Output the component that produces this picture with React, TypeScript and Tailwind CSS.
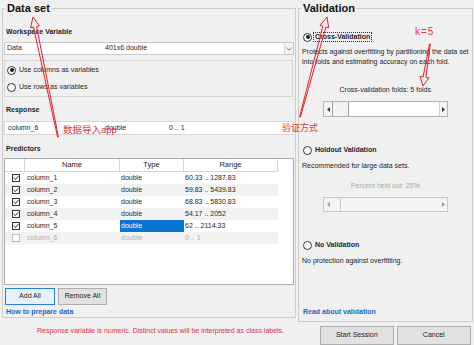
import React from "react";

type Row = { name: string; type: string; range: string; checked: boolean; selected?: boolean; disabled?: boolean };

const rows: Row[] = [
  { name: "column_1", type: "double", range: "60.33 .. 1287.83", checked: true },
  { name: "column_2", type: "double", range: "59.83 .. 5439.83", checked: true },
  { name: "column_3", type: "double", range: "68.83 .. 5830.83", checked: true },
  { name: "column_4", type: "double", range: "54.17 .. 2052", checked: true },
  { name: "column_5", type: "double", range: "62 .. 2114.33", checked: true, selected: true },
  { name: "column_6", type: "double", range: "0 .. 1", checked: false, disabled: true },
];

function Radio({ checked }: { checked?: boolean }) {
  return (
    <span className="w-[9px] h-[9px] rounded-full border border-[#333] bg-white flex items-center justify-center shrink-0">
      {checked && <span className="w-[4px] h-[4px] rounded-full bg-[#1a1a1a]" />}
    </span>
  );
}

function Check({ checked, disabled }: { checked: boolean; disabled?: boolean }) {
  return (
    <span
      className={
        disabled
          ? "w-[8px] h-[8px] border border-[#bdbdbd] bg-white flex items-center justify-center"
          : "w-[8px] h-[8px] border border-[#333] bg-white flex items-center justify-center"
      }
    >
      {checked && (
        <svg width="6" height="6" viewBox="0 0 6 6">
          <path d="M0.6 3 L2.3 4.7 L5.4 1.1" stroke="#222" strokeWidth="0.9" fill="none" />
        </svg>
      )}
    </span>
  );
}

function Slider({ disabled }: { disabled?: boolean }) {
  if (disabled) {
    return (
      <div className="ml-[21px] w-[125px] h-[15px] border border-[#c8c8c8] bg-[#f4f4f4] flex">
        <div className="w-[8px] flex items-center justify-center">
          <svg width="3" height="5" viewBox="0 0 3 5"><path d="M3 0 L0 2.5 L3 5 Z" fill="#9a9a9a" /></svg>
        </div>
        <div className="w-[9px] border-r border-[#c8c8c8]" />
        <div className="flex-1" />
        <div className="w-[8px] flex items-center justify-center">
          <svg width="3" height="5" viewBox="0 0 3 5"><path d="M0 0 L3 2.5 L0 5 Z" fill="#9a9a9a" /></svg>
        </div>
      </div>
    );
  }
  return (
    <div className="ml-[21px] w-[125px] h-[16px] border border-[#b5b5b5] bg-white flex">
      <div className="w-[8px] bg-[#f4f4f4] flex items-center justify-center">
        <svg width="3" height="5" viewBox="0 0 3 5"><path d="M3 0 L0 2.5 L3 5 Z" fill="#333" /></svg>
      </div>
      <div className="w-[17px] bg-[#f2f2f2] border-x border-[#9d9d9d]" />
      <div className="flex-1 bg-white" />
      <div className="w-[8px] bg-[#f4f4f4] border-l border-[#d0d0d0] flex items-center justify-center">
        <svg width="3" height="5" viewBox="0 0 3 5"><path d="M0 0 L3 2.5 L0 5 Z" fill="#333" /></svg>
      </div>
    </div>
  );
}

function arrowPoints(tx: number, ty: number, px: number, py: number, L = 10, W = 4.5, w = 1.6, t = 0.4) {
  const dx = px - tx;
  const dy = py - ty;
  const len = Math.sqrt(dx * dx + dy * dy);
  const ux = dx / len;
  const uy = dy / len;
  const nx = -uy;
  const ny = ux;
  const bx = px - ux * L;
  const by = py - uy * L;
  const pts = [
    [tx + nx * t, ty + ny * t],
    [bx + nx * w, by + ny * w],
    [bx + nx * W, by + ny * W],
    [px, py],
    [bx - nx * W, by - ny * W],
    [bx - nx * w, by - ny * w],
    [tx - nx * t, ty - ny * t],
  ];
  return pts.map((p) => `${p[0].toFixed(1)},${p[1].toFixed(1)}`).join(" ");
}

export default function App() {
  return (
    <div className="w-[474px] h-[345px] bg-[#f0f0f0] relative overflow-hidden text-[7px] text-[#1e1e1e] font-['Liberation_Sans','Noto_Sans_CJK_SC',sans-serif]">
      <div className="flex pl-[2px] pt-[1px] gap-[2px] items-start">
        {/* Left column */}
        <div className="flex flex-col w-[294px]">
          <fieldset className="border border-[#cdcdcd] px-[1px] flex flex-col">
            <legend className="ml-[1px] px-[2px] text-[11px] font-bold leading-[14px] text-[#111]">Data set</legend>
            <div className="mt-[12px] h-[10px] leading-[10px] font-bold pl-[2px]">Workspace Variable</div>
            <div className="mt-[5px] h-[13px] border border-[#c9c9c9] bg-white flex items-center">
              <span className="pl-[2px] w-[100px]">Data</span>
              <span>401x6 double</span>
              <span className="ml-auto w-[9px] h-full bg-[#f2f2f2] border-l border-[#d4d4d4] flex items-center justify-center">
                <svg width="6" height="4" viewBox="0 0 6 4"><path d="M0.5 0.8 L3 3.2 L5.5 0.8" stroke="#666" strokeWidth="0.8" fill="none" /></svg>
              </span>
            </div>
            <div className="mt-[5px] h-[37px] mr-[1px] border border-[#d2d2d2] flex flex-col pt-[4px] pl-[2px] gap-[7px]">
              <div className="h-[10px] flex items-center gap-[3px]">
                <Radio checked />
                <span>Use columns as variables</span>
              </div>
              <div className="h-[10px] flex items-center gap-[3px]">
                <Radio />
                <span>Use rows as variables</span>
              </div>
            </div>
            <div className="mt-[8px] h-[10px] leading-[10px] font-bold pl-[2px]">Response</div>
            <div className="mt-[6px] h-[14px] border border-[#d6d6d6] bg-white flex items-center">
              <span className="pl-[3px] w-[100px]">column_6</span>
              <span className="w-[64px]">double</span>
              <span>0 .. 1</span>
            </div>
            <div className="mt-[9px] h-[10px] leading-[10px] font-bold pl-[2px]">Predictors</div>
            <div className="mt-[4px] h-[127px] border border-[#ababab] bg-white">
              <div className="w-[273px]">
                <div className="grid grid-cols-[20px_95px_64px_94px] h-[13px] border-b border-[#d5d5d5] text-[7.5px]">
                  <div className="border-r border-[#d5d5d5]" />
                  <div className="border-r border-[#d5d5d5] flex items-center justify-center">Name</div>
                  <div className="border-r border-[#d5d5d5] flex items-center justify-center">Type</div>
                  <div className="border-r border-[#d5d5d5] flex items-center justify-center">Range</div>
                </div>
                {rows.map((r, i) => (
                  <div
                    key={r.name}
                    className={
                      i % 2 === 1
                        ? "grid grid-cols-[20px_95px_64px_94px] h-[12px] items-center bg-[#f2f2f2]"
                        : "grid grid-cols-[20px_95px_64px_94px] h-[12px] items-center bg-white"
                    }
                  >
                    <div className="flex justify-center pl-[2px]">
                      <Check checked={r.checked} disabled={r.disabled} />
                    </div>
                    <div className={r.disabled ? "pl-[2px] text-[#b0b0b0]" : "pl-[2px]"}>{r.name}</div>
                    {r.selected ? (
                      <div className="h-full bg-[#0a74d4] text-white flex items-center pl-[1px]">{r.type}</div>
                    ) : (
                      <div className={r.disabled ? "pl-[1px] text-[#b0b0b0]" : "pl-[1px]"}>{r.type}</div>
                    )}
                    <div className={r.disabled ? "pl-[1px] text-[#b0b0b0]" : "pl-[1px]"}>{r.range}</div>
                  </div>
                ))}
              </div>
            </div>
            <div className="mt-[3px] h-[17px] flex gap-[3px] pl-[1px]">
              <button className="w-[50px] h-full bg-[#e5f1fb] border border-[#2a7fd4] text-[#1e1e1e]">Add All</button>
              <button className="w-[49px] h-full bg-[#e1e1e1] border border-[#adadad] text-[#1e1e1e]">Remove All</button>
            </div>
            <div className="mt-[2px] h-[10px] leading-[10px] pl-[2px] font-bold text-[#1f66c2]">How to prepare data</div>
          </fieldset>
          <div className="mt-[8px] h-[10px] leading-[10px] pl-[35px] text-[#d8313f] whitespace-nowrap">
            Response variable is numeric. Distinct values will be interpreted as class labels.
          </div>
        </div>

        {/* Right column */}
        <div className="flex flex-col w-[173px]">
          <fieldset className="border border-[#cdcdcd] px-[3px] pb-[4px] flex flex-col">
            <legend className="px-[1px] text-[11px] font-bold leading-[14px] text-[#111]">Validation</legend>
            <div className="mt-[17px] h-[10px] flex items-center gap-[1px] pl-[1px]">
              <Radio checked />
              <span className="font-bold border border-dotted border-[#333] px-[1px] leading-[8px]">Cross-Validation</span>
            </div>
            <div className="mt-[5px] leading-[9.5px] whitespace-nowrap">
              Protects against overfitting by partitioning the data set
              <br />
              into folds and estimating accuracy on each fold.
            </div>
            <div className="mt-[19px] h-[10px] leading-[10px] text-center">Cross-validation folds: 5 folds</div>
            <div className="mt-[6px]">
              <Slider />
            </div>
            <div className="mt-[28px] h-[10px] flex items-center gap-[3px] pl-[1px]">
              <Radio />
              <span className="font-bold">Holdout Validation</span>
            </div>
            <div className="mt-[6px] h-[10px] leading-[10px]">Recommended for large data sets.</div>
            <div className="mt-[10px] h-[10px] leading-[10px] text-center text-[#a8a8a8]">Percent held out: 25%</div>
            <div className="mt-[6px]">
              <Slider disabled />
            </div>
            <div className="mt-[28px] h-[10px] flex items-center gap-[3px] pl-[1px]">
              <Radio />
              <span className="font-bold">No Validation</span>
            </div>
            <div className="mt-[6px] h-[10px] leading-[10px]">No protection against overfitting.</div>
            <div className="mt-[41px] h-[10px] leading-[10px] pl-[1px] font-bold text-[#1f66c2]">Read about validation</div>
          </fieldset>
          <div className="mt-[4px] h-[19px] flex gap-[3px] ml-[22px]">
            <button className="w-[74px] h-full bg-[#e1e1e1] border border-[#adadad] text-[#1e1e1e]">Start Session</button>
            <button className="w-[75px] h-full bg-[#e1e1e1] border border-[#adadad] text-[#1e1e1e]">Cancel</button>
          </div>
        </div>
      </div>

      {/* Annotations */}
      <svg className="absolute inset-0 pointer-events-none" width="474" height="345" viewBox="0 0 474 345">
        <polygon points={arrowPoints(58, 137, 33, 17)} fill="none" stroke="#e0202c" strokeWidth="1" strokeLinejoin="miter" />
        <polygon points={arrowPoints(300, 117, 327, 17)} fill="none" stroke="#e0202c" strokeWidth="1" strokeLinejoin="miter" />
        <polygon points={arrowPoints(430, 44, 423, 86, 9, 4.5, 1.4, 0.4)} fill="none" stroke="#e0202c" strokeWidth="1" strokeLinejoin="miter" />
      </svg>
      <div className="absolute left-[63px] top-[124px] text-[9.5px] leading-[12px] text-[#e3343f] whitespace-nowrap">数据导入app</div>
      <div className="absolute left-[282px] top-[122px] text-[9px] leading-[12px] text-[#e3343f] whitespace-nowrap">验证方式</div>
      <div className="absolute left-[415px] top-[26px] text-[10px] leading-[12px] tracking-[1px] text-[#e3343f] whitespace-nowrap">k=5</div>
    </div>
  );
}
